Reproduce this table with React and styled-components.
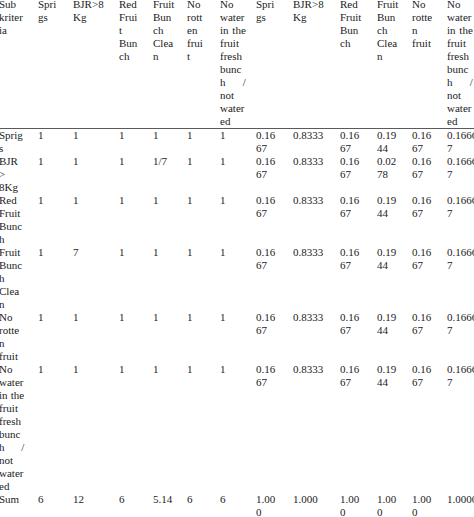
import styled, { createGlobalStyle } from 'styled-components'

const GlobalStyle = createGlobalStyle`
  html, body {
    margin: 0;
    padding: 0;
    overflow: hidden;
    background: #fff;
  }
`

// column tracks and the text measure inside each column
const tracks = [39, 35, 46, 34, 34, 33, 36, 37, 47, 37, 35, 35, 40]
const measures = [25.2, 21, 33, 20, 22.3, 17.5, 25.8, 21.5, 33, 22.3, 22.3, 22, 25.8]

const StPage = styled.div`
  width: 474px;
  height: 517px;
  overflow: hidden;
`

const StTable = styled.div`
  margin: -2px 0 0 -1px;
  width: 488px;
  font-family: 'Liberation Serif', 'Times New Roman', serif;
  font-size: 11px;
  line-height: 13px;
  color: #1c1c1c;
`

const StRow = styled.div`
  display: grid;
  grid-template-columns: ${tracks.map((t) => `${t}px`).join(' ')};
  border-bottom: ${(p) => (p.$head ? '1px solid #5a5a5a' : 'none')};
`

const StCell = styled.div`
  width: ${(p) => p.$w}px;
  text-align: justify;
  overflow-wrap: ${(p) => (p.$tight ? 'normal' : 'anywhere')};
  white-space: ${(p) => (p.$tight ? 'normal' : 'normal')};
`

const header = [
  'Sub kriteria',
  'Sprigs',
  'BJR>8 Kg',
  'Red Fruit Bunch',
  'Fruit Bunch Clean',
  'No rotten fruit',
  'No water in the fruit fresh bunch / not watered',
  'Sprigs',
  'BJR>8 Kg',
  'Red Fruit Bunch',
  'Fruit Bunch Clean',
  'No rotten fruit',
  'No water in the fruit fresh bunch / not watered',
]

const weights = ['0.1667', '0.8333', '0.1667', '0.1944', '0.1667', '0.1666\u200B7']

const rows = [
  ['Sprigs', '1', '1', '1', '1', '1', '1', ...weights],
  ['BJR > 8Kg', '1', '1', '1', '1/7', '1', '1', '0.1667', '0.8333', '0.1667', '0.0278', '0.1667', '0.1666\u200B7'],
  ['Red Fruit Bunch', '1', '1', '1', '1', '1', '1', ...weights],
  ['Fruit Bunch Clean', '1', '7', '1', '1', '1', '1', ...weights],
  ['No rotten fruit', '1', '1', '1', '1', '1', '1', ...weights],
  ['No water in the fruit fresh bunch / not watered', '1', '1', '1', '1', '1', '1', ...weights],
  ['Sum', '6', '12', '6', '5.14', '6', '6', '1.000', '1.000', '1.000', '1.000', '1.000', '1.0000'],
]

function Row({ cells, head }) {
  return (
    <StRow $head={head}>
      {cells.map((text, i) => (
        <StCell key={i} $w={measures[i]} $tight={!head && i === cells.length - 1}>
          {text}
        </StCell>
      ))}
    </StRow>
  )
}

export default function App() {
  return (
    <>
      <GlobalStyle />
      <StPage>
        <StTable>
          <Row cells={header} head />
          {rows.map((r, i) => (
            <Row key={i} cells={r} />
          ))}
        </StTable>
      </StPage>
    </>
  )
}
